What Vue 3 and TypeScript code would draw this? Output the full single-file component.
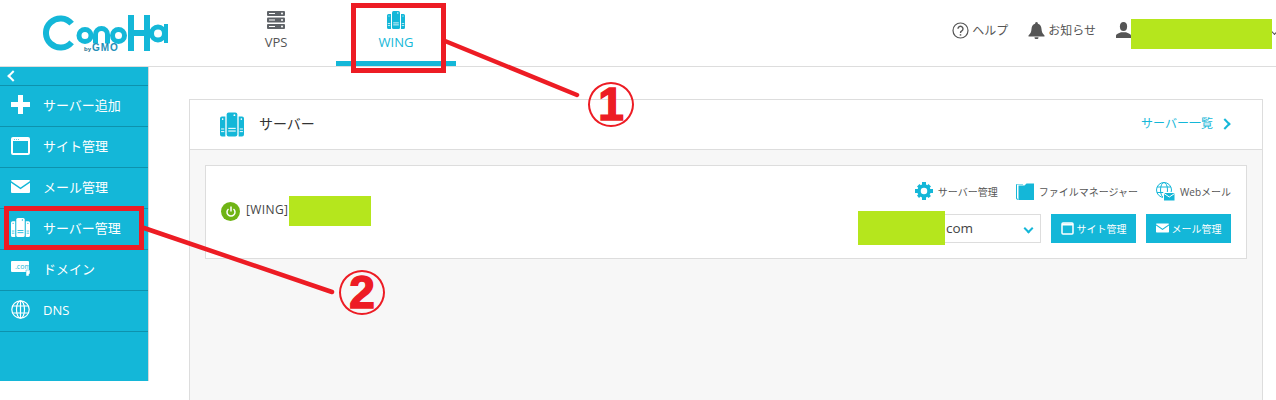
<script setup lang="ts">
interface SideItem {
  label: string
  icon: string
}

const sideItems: SideItem[] = [
  { label: 'サーバー追加', icon: 'plus' },
  { label: 'サイト管理', icon: 'site' },
  { label: 'メール管理', icon: 'mail' },
  { label: 'サーバー管理', icon: 'server' },
  { label: 'ドメイン', icon: 'domain' },
  { label: 'DNS', icon: 'globe' }
]
</script>

<template>
  <div class="page">
    <!-- shared server icon, the cut-outs take --cut from the place it is used -->
    <svg width="0" height="0" class="defs">
      <symbol id="server-icon" viewBox="0 0 18 18">
        <path fill="currentColor" d="M5 1.500A1.500 1.500 0 0 1 6.500 0h5A1.500 1.500 0 0 1 13 1.500V16.500A1.500 1.500 0 0 1 11.500 18h-5A1.500 1.500 0 0 1 5 16.500z" />
        <path fill="currentColor" d="M0 4.500A1.500 1.500 0 0 1 1.500 3H4V18H1.500A1.500 1.500 0 0 1 0 16.500zM14 3h2.500A1.500 1.500 0 0 1 18 4.500v12a1.500 1.500 0 0 1-1.500 1.500H14z" />
        <g fill="var(--cut)">
          <rect x="6.200" y="11.500" width="5.600" height="0.800" />
          <rect x="6.200" y="13.500" width="5.600" height="0.800" />
          <rect x="0.800" y="12" width="2.400" height="0.700" />
          <rect x="14.800" y="12" width="2.400" height="0.700" />
          <rect x="0.800" y="14" width="2.400" height="0.700" />
          <rect x="14.800" y="14" width="2.400" height="0.700" />
          <circle cx="10.800" cy="2" r="0.700" />
          <circle cx="2" cy="5" r="0.600" />
          <circle cx="16" cy="5" r="0.600" />
        </g>
      </symbol>
    </svg>

    <header class="topbar">
      <div class="logo">
        <svg width="126" height="40" viewBox="0 0 126 40" fill="none" stroke="#14b7d8">
          <path d="M28.600 10.700A14.500 14.500 0 1 0 28.600 29.300" stroke-width="6" />
          <circle cx="42" cy="22.500" r="6" stroke-width="5" />
          <path d="M52.500 30.500V21.500a6 6 0 0 1 12 0V30.500" stroke-width="5" />
          <circle cx="75.500" cy="22.500" r="6" stroke-width="5" />
          <path d="M88 2V38M104 2V38M88 20H104" stroke-width="6" />
          <circle cx="115" cy="20.500" r="6.500" stroke-width="5" />
          <path d="M123 11V30" stroke-width="4" />
        </svg>
        <span class="by-gmo"><small>by</small>GMO</span>
      </div>
      <nav class="tabs">
        <a class="tab">
          <svg width="18" height="18" viewBox="0 0 18 18" fill="#5f6368">
            <rect x="0" y="0" width="18" height="5" rx="1" />
            <rect x="0" y="6.500" width="18" height="5" rx="1" />
            <rect x="0" y="13" width="18" height="5" rx="1" />
            <g fill="#fff">
              <rect x="2" y="2" width="6" height="1" />
              <rect x="2" y="8.500" width="6" height="1" />
              <rect x="2" y="15" width="6" height="1" />
              <circle cx="15" cy="2.500" r="1" />
              <circle cx="15" cy="9" r="1" />
              <circle cx="15" cy="15.500" r="1" />
            </g>
          </svg>
          <span>VPS</span>
        </a>
        <a class="tab active">
          <svg width="18" height="18" class="icon-cyan"><use href="#server-icon" /></svg>
          <span>WING</span>
        </a>
      </nav>
      <div class="top-links">
        <a class="top-link">
          <svg width="17" height="17" viewBox="0 0 17 17" fill="none" stroke="#555">
            <circle cx="8.500" cy="8.500" r="7.500" stroke-width="1.200" />
            <path d="M6 6.800a2.500 2.500 0 1 1 3.800 2.100c-.9.500-1.300 1-1.300 2" stroke-width="1.400" />
            <path d="M8.500 12.200v1.400" stroke-width="1.500" />
          </svg>
          ヘルプ
        </a>
        <a class="top-link">
          <svg width="17" height="17" viewBox="0 0 17 17" fill="#555">
            <path d="M8.500 0a1.500 1.500 0 0 1 1.400 1.700C12.500 2.400 13.300 4.500 13.500 7c.2 3 1 4.500 3 6.500v1H.5v-1c2-2 2.800-3.500 3-6.500.2-2.500 1-4.600 3.600-5.300A1.500 1.500 0 0 1 8.500 0z" />
            <path d="M6.500 15.200h4a2 2 0 0 1-4 0z" />
          </svg>
          お知らせ
        </a>
        <a class="top-link user">
          <svg width="15" height="16" viewBox="0 0 15 16" fill="#555">
            <ellipse cx="7.500" cy="4.500" rx="3.600" ry="4.500" />
            <path d="M0 16v-2.500c0-1.500 2.800-2.500 5-3.300h5c2.200.8 5 1.800 5 3.300V16z" />
          </svg>
        </a>
        <span class="top-caret"></span>
      </div>
    </header>

    <div class="body-row">
      <aside class="sidebar">
        <div class="side-back">
          <span class="back-arrow"></span>
        </div>
        <a v-for="item in sideItems" :key="item.label" class="side-item">
          <span class="side-icon">
            <svg v-if="item.icon === 'plus'" width="19" height="19" viewBox="0 0 19 19" fill="#fff">
              <path d="M7 0h5v7h7v5h-7v7H7v-7H0V7h7z" />
            </svg>
            <svg v-else-if="item.icon === 'site'" width="19" height="18" viewBox="0 0 19 18" fill="none" stroke="#fff">
              <rect x="1" y="1" width="17" height="16" rx="1" stroke-width="2" />
              <path d="M1 3H18" stroke-width="2" />
              <path d="M3 2.500h.8M5 2.500h.8M7 2.500h.8" stroke="#14b7d8" stroke-width="0.800" />
            </svg>
            <svg v-else-if="item.icon === 'mail'" width="19" height="13" viewBox="0 0 19 13" fill="#fff">
              <path d="M0 1a1 1 0 0 1 1-1h17a1 1 0 0 1 1 1L9.500 7.500z" />
              <path d="M0 2.800l9.500 6.500L19 2.800V12a1 1 0 0 1-1 1H1a1 1 0 0 1-1-1z" />
            </svg>
            <svg v-else-if="item.icon === 'server'" width="19" height="19" class="icon-white"><use href="#server-icon" /></svg>
            <svg v-else-if="item.icon === 'domain'" width="21" height="15" viewBox="0 0 21 15" fill="#fff">
              <rect x="0" y="0" width="18" height="11" rx="1" />
              <path d="M15 9h4v4h-1v2h-3z" stroke="#14b7d8" stroke-width="0.500" />
            </svg>
            <svg v-else width="19" height="19" viewBox="0 0 19 19" fill="none" stroke="#fff" stroke-width="1.200">
              <circle cx="9.500" cy="9.500" r="8.700" />
              <ellipse cx="9.500" cy="9.500" rx="4" ry="8.700" />
              <path d="M9.500 1V18M1.500 6H17.500M1.500 13H17.500" />
            </svg>
            <em v-if="item.icon === 'domain'" class="com-label">.com</em>
          </span>
          <span class="side-label">{{ item.label }}</span>
        </a>
      </aside>

      <main class="main">
        <section class="server-panel">
          <div class="panel-head">
            <div class="panel-title">
              <svg width="24" height="25" class="icon-cyan"><use href="#server-icon" /></svg>
              <span>サーバー</span>
            </div>
            <a class="panel-link"><span>サーバー一覧</span><span class="link-arrow"></span></a>
          </div>

          <div class="panel-body">
            <div class="server-card">
              <div class="server-name">
                <span class="power">
                  <svg width="10" height="11" viewBox="0 0 10 11" fill="none" stroke="#fff" stroke-width="1.500">
                    <path d="M2.500 3a4 4 0 1 0 5 0M5 0.500v5" />
                  </svg>
                </span>
                <span class="wing-tag">[WING]</span>
                <span class="mask mask-name"></span>
              </div>
              <div class="server-actions">
                <div class="action-links">
                  <a class="action-link">
                    <svg width="18" height="18" viewBox="0 0 18 18" fill="#14b7d8">
                      <circle cx="9" cy="9" r="5" fill="none" stroke="#14b7d8" stroke-width="3.500" />
                      <path d="M7 0h4v3H7zM7 15h4v3H7zM0 7h3v4H0zM15 7h3v4h-3zM2 4.500l2.500-2.500 2 2-2.500 2.500zM13.500 2L16 4.500l-2 2L11.500 4zM2 13.500L4.500 11l2 2.500L4 16zM11.500 14l2-2.500 2.500 2.500-2.500 2z" />
                    </svg>
                    サーバー管理
                  </a>
                  <a class="action-link">
                    <svg width="18" height="18" viewBox="0 0 18 18" fill="#14b7d8">
                      <path d="M2.500 3.500h6l2-2H18V18H2.500z" />
                      <path d="M0 3a1 1 0 0 1 1-1h6v.600H1V16l1.500 2C1 18 0 17 0 16z" />
                    </svg>
                    ファイルマネージャー
                  </a>
                  <a class="action-link">
                    <svg width="19" height="19" viewBox="0 0 19 19" fill="none" stroke="#14b7d8">
                      <circle cx="8" cy="8" r="7.500" stroke-width="1" />
                      <ellipse cx="8" cy="8" rx="3.500" ry="7.500" stroke-width="1" />
                      <path d="M1 5H15M1 10.500H8" stroke-width="1" />
                      <path d="M7.500 10.500H19V19H7.500z" fill="#14b7d8" stroke="#fff" stroke-width="1" />
                      <path d="M8 11.500l5.300 3.500 5.300-3.500" stroke="#fff" stroke-width="1" />
                    </svg>
                    Webメール
                  </a>
                </div>
                <div class="action-row">
                  <div class="domain-select">
                    <span class="domain-value">com</span>
                    <span class="select-caret"></span>
                    <span class="mask mask-domain"></span>
                  </div>
                  <a class="action-button">
                    <svg width="13" height="13" viewBox="0 0 13 13" fill="none" stroke="#fff" stroke-width="1.500">
                      <rect x="1" y="1" width="11" height="11" rx="1" />
                      <path d="M1 2.500H12" stroke-width="2" />
                    </svg>
                    サイト管理
                  </a>
                  <a class="action-button">
                    <svg width="13" height="10" viewBox="0 0 19 13" fill="#fff">
                      <path d="M0 1a1 1 0 0 1 1-1h17a1 1 0 0 1 1 1L9.500 7.500z" />
                      <path d="M0 2.800l9.500 6.500L19 2.800V12a1 1 0 0 1-1 1H1a1 1 0 0 1-1-1z" />
                    </svg>
                    メール管理
                  </a>
                </div>
              </div>
            </div>
          </div>
        </section>
      </main>
    </div>

    <!-- screenshot annotations drawn over the page -->
    <span class="mask mask-user"></span>
    <svg class="marks" width="1276" height="400" viewBox="0 0 1276 400" fill="none" stroke="#ed1c24">
      <rect x="353.500" y="5.500" width="90" height="65" stroke-width="5" />
      <rect x="6.500" y="208.500" width="135" height="39" stroke-width="5" />
      <path d="M445 41L577 95M144 228L332 292" stroke-width="4.500" stroke-linecap="round" />
    </svg>
    <span class="circled circled-one">1</span>
    <span class="circled circled-two">2</span>
  </div>
</template>

<style>
html,
body {
  margin: 0;
  background: #fff;
}
</style>

<style scoped>
.page {
  position: relative;
  height: 400px;
  overflow: hidden;
  background: #fff;
  color: #555;
  font-family: "Open Sans", "Noto Sans CJK JP", sans-serif;
  font-size: 12px;
}
.defs {
  position: absolute;
}
.icon-cyan {
  color: #14b7d8;
  --cut: #fff;
}
.icon-white {
  color: #fff;
  --cut: #14b7d8;
}
a {
  color: inherit;
  text-decoration: none;
}
.topbar {
  display: flex;
  align-items: stretch;
  height: 66px;
  border-bottom: 1px solid #ddd;
}
.logo {
  position: relative;
  width: 216px;
  padding: 13px 0 0 43px;
  box-sizing: border-box;
}
.by-gmo {
  position: absolute;
  left: 83px;
  top: 44px;
  color: #1f8fb8;
  font-family: "Liberation Sans", sans-serif;
  font-size: 10px;
  font-weight: 700;
  letter-spacing: 1px;
  line-height: 8px;
  background: #fff;
  padding: 0 1px;
}
.by-gmo small {
  font-size: 6px;
  letter-spacing: 0;
  color: #1d6f8c;
  margin-right: 1px;
}
.tabs {
  display: flex;
}
.tab {
  display: flex;
  flex-direction: column;
  align-items: center;
  width: 120px;
  box-sizing: border-box;
  padding-top: 11px;
  height: 66px;
  font-size: 13px;
  line-height: 18px;
  gap: 4px;
}
.tab.active {
  color: #14b7d8;
  border-bottom: 5px solid #14b7d8;
}
.top-links {
  display: flex;
  align-items: center;
  margin-left: auto;
  margin-right: 4px;
  padding-bottom: 6px;
  gap: 20px;
}
.top-link {
  display: flex;
  align-items: center;
  gap: 3px;
  font-size: 12px;
}
.user {
  margin-right: 141px;
}
.top-caret {
  position: absolute;
  left: 1272px;
  top: 29px;
  width: 4px;
  height: 4px;
  border-right: 1px solid #555;
  border-bottom: 1px solid #555;
  transform: rotate(45deg);
}
.body-row {
  display: flex;
  align-items: flex-start;
}
.sidebar {
  width: 148px;
  height: 314px;
  flex: none;
  background: #14b7d8;
  color: #fff;
  box-shadow: 1px 0 0 #d8d8d8;
}
.side-back {
  height: 18px;
  border-bottom: 1px solid #0e92ad;
  display: flex;
  align-items: center;
  padding-left: 9px;
}
.back-arrow {
  width: 6px;
  height: 6px;
  border-left: 2.500px solid #fff;
  border-bottom: 2.500px solid #fff;
  transform: rotate(45deg);
}
.side-item {
  display: flex;
  align-items: center;
  height: 40px;
  box-sizing: content-box;
  border-bottom: 1px solid #0e92ad;
  font-size: 13px;
  color: #fff;
}
.side-icon {
  position: relative;
  display: flex;
  align-items: center;
  width: 43px;
  box-sizing: border-box;
  padding: 0 0 3px 11px;
  flex: none;
}
.com-label {
  position: absolute;
  left: 15px;
  top: 0;
  font-style: normal;
  font-size: 7px;
  line-height: 11px;
  color: #14b7d8;
}
.side-label {
  padding-bottom: 3px;
}
.main {
  flex: 1;
  padding: 32px 13px 0 41px;
  min-width: 0;
}
.server-panel {
  border: 1px solid #ddd;
  height: 320px;
}
.panel-head {
  display: flex;
  align-items: center;
  justify-content: space-between;
  height: 49px;
  border-bottom: 1px solid #ddd;
  padding: 0 33px 0 30px;
}
.panel-title {
  display: flex;
  align-items: center;
  gap: 15px;
  color: #333;
  font-size: 14px;
}
.panel-title span,
.panel-link span:first-child {
  padding-bottom: 3px;
}
.panel-link {
  display: flex;
  align-items: center;
  gap: 8px;
  color: #14b7d8;
  font-size: 12px;
}
.link-arrow {
  width: 6px;
  height: 6px;
  margin-bottom: 2px;
  border-top: 2px solid #14b7d8;
  border-right: 2px solid #14b7d8;
  transform: rotate(45deg);
}
.panel-body {
  background: #f7f7f7;
  padding: 15px;
  height: 300px;
}
.server-card {
  display: flex;
  align-items: center;
  justify-content: space-between;
  background: #fff;
  border: 1px solid #ddd;
  height: 94px;
  box-sizing: border-box;
  padding: 0 15px;
}
.server-name {
  display: flex;
  align-items: center;
  gap: 6px;
  color: #444;
  font-size: 12px;
  margin-top: -2px;
  position: relative;
}
.wing-tag {
  letter-spacing: 0.400px;
  padding-bottom: 3px;
}
.power {
  width: 19px;
  height: 19px;
  border-radius: 50%;
  background: #6fb415;
  display: flex;
  align-items: center;
  justify-content: center;
}
.mask {
  background: #b5e61d;
  display: block;
}
.mask-name {
  position: absolute;
  left: 68px;
  top: -5px;
  width: 82px;
  height: 30px;
}
.server-actions {
  display: flex;
  flex-direction: column;
  align-items: flex-end;
  gap: 13px;
}
.action-links {
  display: flex;
  align-items: center;
  gap: 18px;
}
.action-link {
  display: flex;
  align-items: center;
  gap: 5px;
  font-size: 10px;
}
.action-row {
  display: flex;
  align-items: center;
  gap: 10px;
}
.domain-select {
  position: relative;
  width: 182px;
  height: 29px;
  box-sizing: border-box;
  border: 1px solid #ddd;
  background: #fff;
  display: flex;
  align-items: center;
  justify-content: space-between;
  padding: 0 8px 0 86px;
  color: #444;
  font-size: 13.500px;
}
.select-caret {
  width: 5px;
  height: 5px;
  border-right: 2px solid #14b7d8;
  border-bottom: 2px solid #14b7d8;
  transform: rotate(45deg);
}
.mask-domain {
  position: absolute;
  left: -2px;
  top: -4px;
  width: 87px;
  height: 34px;
}
.action-button {
  display: flex;
  align-items: center;
  justify-content: center;
  gap: 3px;
  width: 85px;
  height: 29px;
  background: #14b7d8;
  color: #fff;
  font-size: 10px;
}
.mask-user {
  position: absolute;
  left: 1131px;
  top: 19px;
  width: 141px;
  height: 30px;
}
.marks {
  position: absolute;
  left: 0;
  top: 0;
  pointer-events: none;
}
.circled {
  position: absolute;
  width: 46px;
  height: 45px;
  box-sizing: border-box;
  border: 2px solid #ed1c24;
  border-radius: 50%;
  display: flex;
  align-items: center;
  justify-content: center;
  color: #ed1c24;
  font-family: "Liberation Sans", sans-serif;
  font-weight: 700;
  font-size: 46px;
  line-height: 41px;
  -webkit-text-stroke: 1.500px #ed1c24;
}
.circled-one {
  left: 588px;
  top: 82px;
}
.circled-two {
  left: 339px;
  top: 270px;
}
</style>
